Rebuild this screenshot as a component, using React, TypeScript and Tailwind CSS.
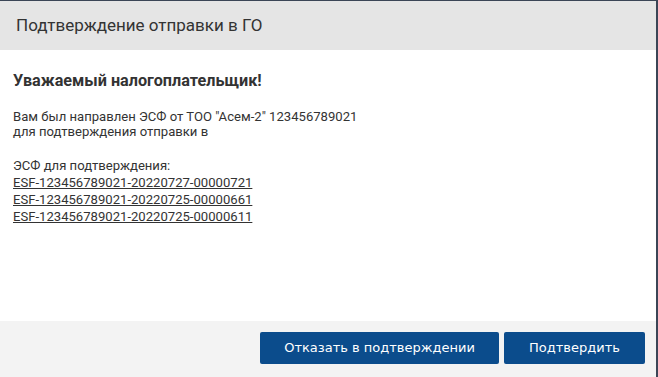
export default function App() {
  const docs = [
    'ESF-123456789021-20220727-00000721',
    'ESF-123456789021-20220725-00000661',
    'ESF-123456789021-20220725-00000611',
  ];

  return (
    <div className="w-[658px] h-[377px] bg-[#3b4556] pt-px pr-[2px] font-['Roboto',sans-serif] text-[#333]">
      <div className="flex h-[376px] flex-col bg-white">
        {/* Header */}
        <div className="flex h-[49px] shrink-0 items-center bg-[#e5e5e5] px-4">
          <span className="text-[17px] leading-none">Подтверждение отправки в ГО</span>
        </div>

        {/* Body */}
        <div className="flex-1 px-[13px] pt-[21px]">
          <div className="text-[16.2px] font-bold leading-[20px]">Уважаемый налогоплательщик!</div>
          <div className="mt-[18px] text-[13.1px] leading-[15px]">
            <p>Вам был направлен ЭСФ от ТОО "Асем-2" 123456789021</p>
            <p>для подтверждения отправки в</p>
          </div>
          <div className="mt-[18px] text-[13.1px] leading-[17px]">
            <p>ЭСФ для подтверждения:</p>
            {docs.map((d) => (
              <a key={d} href="#" className="block underline">
                {d}
              </a>
            ))}
          </div>
        </div>

        {/* Footer */}
        <div className="flex h-[56px] shrink-0 items-start justify-end gap-[5px] bg-[#f3f3f3] pr-[11px] pt-[11px]">
          <button className="h-[32px] w-[239px] rounded-[2px] bg-[#0b4c8c] font-['DejaVu_Sans',sans-serif] text-[13px] text-white">
            Отказать в подтверждении
          </button>
          <button className="h-[32px] w-[141px] rounded-[2px] bg-[#0b4c8c] font-['DejaVu_Sans',sans-serif] text-[13px] text-white">
            Подтвердить
          </button>
        </div>
      </div>
    </div>
  );
}
